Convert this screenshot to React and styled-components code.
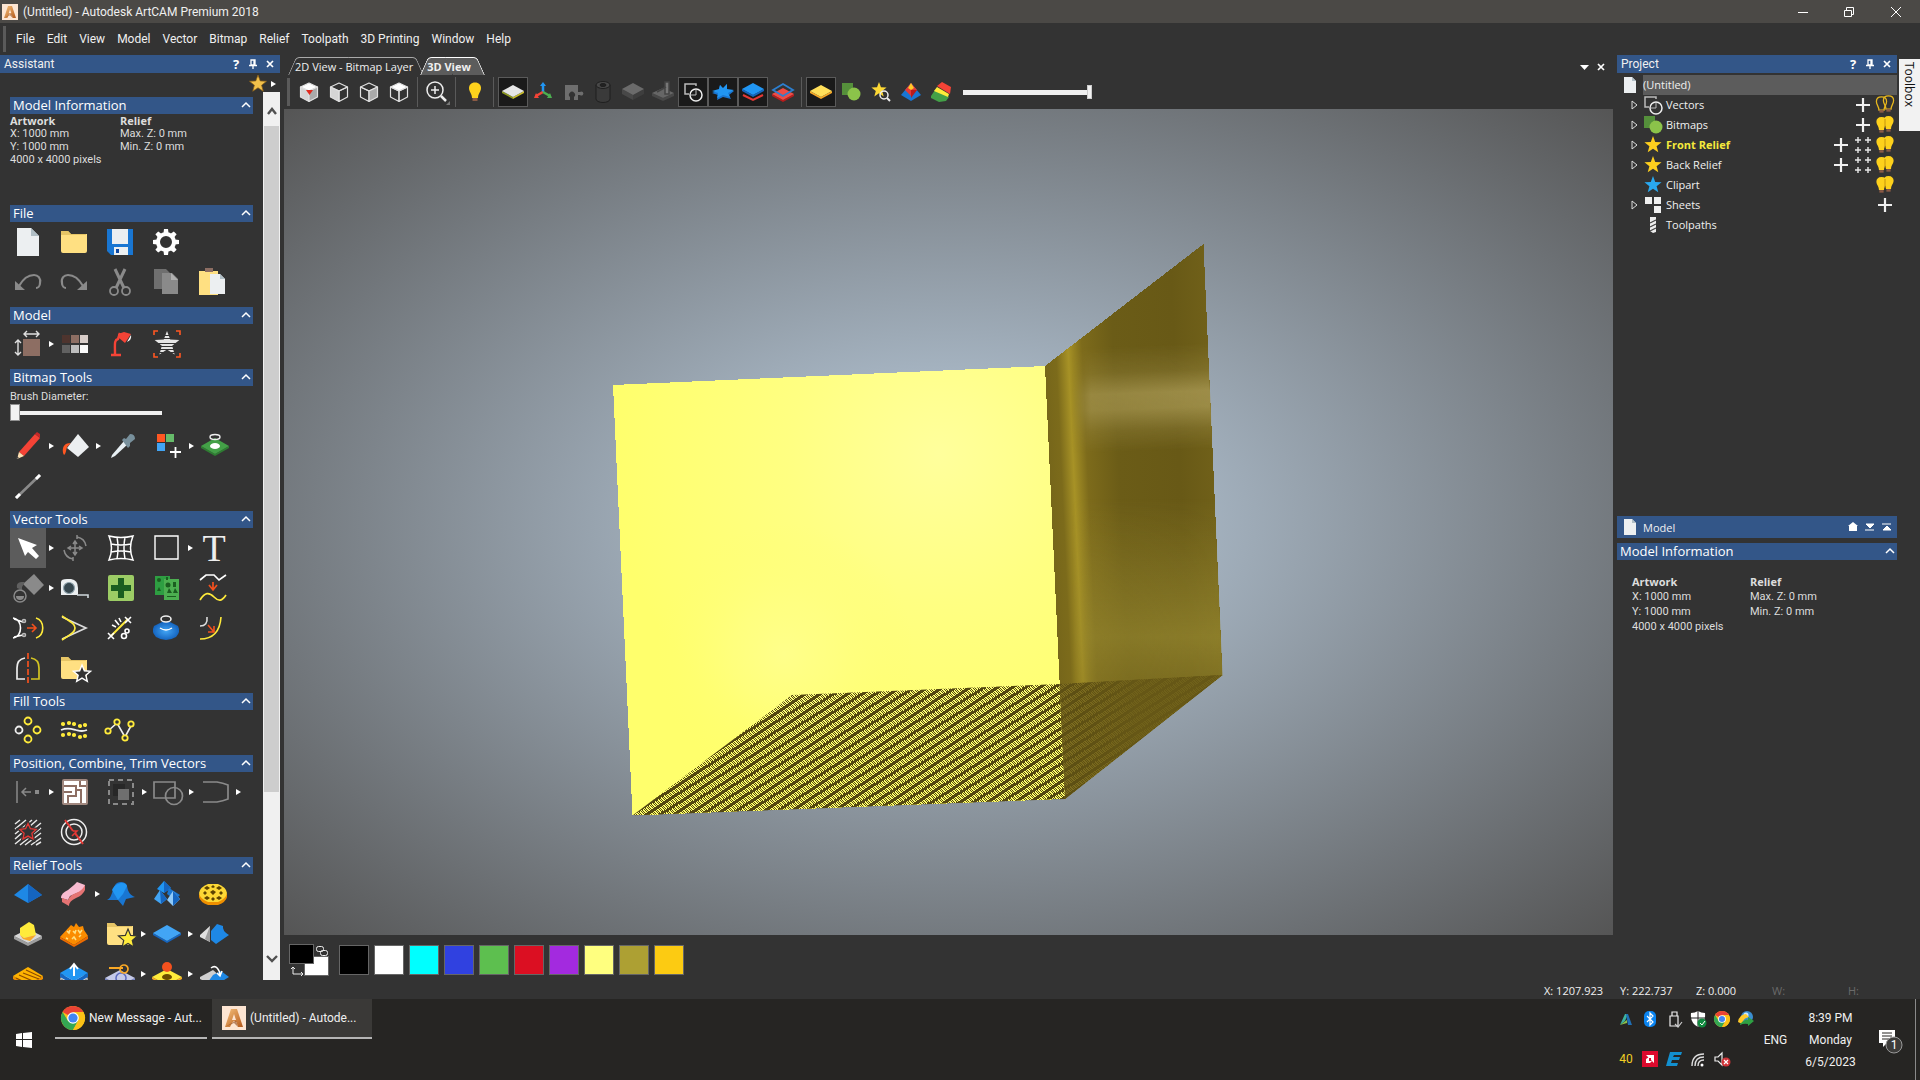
import React from 'react';
import styled, { createGlobalStyle, css } from 'styled-components';

const ui = `'Open Sans', 'Noto Sans', sans-serif`;
const narrow = `Roboto, 'Liberation Sans', sans-serif`;
const blue = '#335688';
const panel = '#333333';

const Global = createGlobalStyle`
  * { box-sizing: border-box; }
  body { margin: 0; background: ${panel}; color: #f0f0f0; font-family: ${ui}; font-size: 11px; overflow: hidden; }
  button { font: inherit; color: inherit; background: none; border: 0; padding: 0; margin: 0; white-space: nowrap; }
  ul { list-style: none; margin: 0; padding: 0; }
  h2, h3, p, dl, dt, dd { margin: 0; font-weight: 400; font-size: inherit; }
  svg { display: block; flex: none; overflow: visible; }
`;

/* ---------- icons: drawn around their own centre ---------- */

const starPts = (r, k = 0.42, cx = 0, cy = 0) =>
  Array.from({ length: 10 }, (_, i) => {
    const a = -Math.PI / 2 + (i * Math.PI) / 5;
    const q = i % 2 ? r * k : r;
    return `${(cx + q * Math.cos(a)).toFixed(2)},${(cy + q * Math.sin(a)).toFixed(2)}`;
  }).join(' ');

const Cube = ({ t, l, r, mark }) => (
  <g stroke="#e0e0e0" strokeWidth="1.2" strokeLinejoin="round">
    <path d="M0-9 8.5-5 0-1-8.5-5z" fill={t} />
    <path d="M-8.5-5 0-1V9.5L-8.5 5z" fill={l} />
    <path d="M8.5-5 0-1V9.5L8.5 5z" fill={r} />
    {mark && <path d="M-3-2H4L0.5 3z" fill="#e02b20" stroke="none" />}
  </g>
);

const Slab = ({ top, side, dark, y = 0, w = 12, h = 6, d = 3 }) => (
  <g>
    <path d={`M${-w} ${y}L0 ${y + h}V${y + h + d}L${-w} ${y + d}z`} fill={side} />
    <path d={`M${w} ${y}L0 ${y + h}V${y + h + d}L${w} ${y + d}z`} fill={dark || side} />
    <path d={`M0 ${y - h}L${w} ${y} 0 ${y + h} ${-w} ${y}z`} fill={top} />
  </g>
);

const Bulb = ({ x = 0, s = 1, line }) => (
  <g transform={`translate(${x} 0) scale(${s})`}>
    <path
      d="M0-9.500C4-9.500 6-7 6-4 6 0 3 1.500 3 6H-3C-3 1.500-6 0-6-4-6-7-4-9.500 0-9.500z"
      fill={line ? 'none' : '#fdd11c'}
      stroke={line ? '#e8b81e' : '#fdd11c'}
      strokeWidth={line ? 1.5 : 0}
    />
    <path d="M-2.500 6H2.500V9H-2.500z" fill="#8b5a44" />
  </g>
);

const twoBulbs = (line) => (
  <g>
    <Bulb x={-3.5} s={0.85} line={line} />
    <g transform="translate(0 -1)"><Bulb x={3.5} s={0.85} line={line} /></g>
    {!line && <path d="M0-6V3" stroke="#b8860b" strokeWidth="0.8" />}
  </g>
);

const docShape = (w, h, f) => (
  <g>
    <path d={`M${-w} ${-h}H${w - f}L${w} ${f - h}V${h}H${-w}z`} fill="#eceff1" />
    <path d={`M${w - f} ${-h}L${w} ${f - h}H${w - f}z`} fill="#b0bec5" />
  </g>
);

const folder = (
  <g>
    <path d="M-13-11H-6L-3-8H13V9Q13 11 11 11H-11Q-13 11-13 9z" fill="#ffe082" />
    <path d="M-13-11H-6L-3-8H12V-7H-13z" fill="#e6c566" />
  </g>
);

const dots = (pts, r, fill, stroke) => pts.map(([x, y], i) => <circle key={i} cx={x} cy={y} r={r} fill={fill} stroke={stroke} strokeWidth="1.8" />);

const Chrome = ({ r }) => (
  <g transform={`scale(${r / 12})`}>
    <circle r="12" fill="#fbc116" />
    <path d="M0 0-10.400-6A12 12 0 0 1 10.400-6z" fill="#ea4335" />
    <path d="M-10.400-6A12 12 0 0 0 0 12L5 3-5 3z" fill="#34a853" />
    <path d="M0-6H10.400A12 12 0 0 1 0 12L5 3z" fill="#fbc116" />
    <circle r="5.800" fill="#fff" />
    <circle r="4.600" fill="#4285f4" />
  </g>
);

const appLogo = (
  <g>
    <defs>
      <linearGradient id="lg" x1="0" y1="0" x2="1" y2="1"><stop offset="0" stopColor="#f7c27c" /><stop offset="1" stopColor="#b4581a" /></linearGradient>
    </defs>
    <path d="M-12-12H12V12H-12z" fill="#fde5d2" />
    <path d="M-3-9H3L9 9H4L2.500 4 0 3-2 5-4 9H-9z" fill="url(#lg)" />
    <path d="M0-4 2 2H-2z" fill="#fde5d2" />
    <path d="M-9 9 2 2.500 4 9 0 5z" fill="#8d4515" opacity=".6" />
  </g>
);

const g = '#8a8a8a';
const ICONS = {
  newDoc: docShape(11, 14, 8),
  smallDoc: docShape(6, 8, 4),
  folder,
  save: (
    <g>
      <path d="M-13-13H13V13H-9L-13 9z" fill="#1976d2" />
      <path d="M-8-13H8V2H-8zM-6 5H8V13H-6z" fill="#eceff1" />
      <path d="M-4 7H-1V11H-4z" fill="#0d47a1" />
    </g>
  ),
  gear: (
    <g>
      <circle r="8" fill="none" stroke="#fff" strokeWidth="4" />
      {[0, 45, 90, 135, 180, 225, 270, 315].map((a) => <path key={a} d="M-2.500-9-2-13H2L2.500-9z" fill="#fff" transform={`rotate(${a})`} />)}
    </g>
  ),
  undo: <g><path d="M-9 4C-5-3 0-7 6-7 10-7 13-4 12 1 12 4 10 6 8 6" fill="none" stroke={g} strokeWidth="2.200" /><path d="M-13-1V8H-3z" fill={g} /></g>,
  redo: <g transform="scale(-1 1)"><path d="M-9 4C-5-3 0-7 6-7 10-7 13-4 12 1 12 4 10 6 8 6" fill="none" stroke={g} strokeWidth="2.200" /><path d="M-13-1V8H-3z" fill={g} /></g>,
  cut: (
    <g stroke={g} fill="none" strokeWidth="1.800">
      <path d="M-5-13 4 6M5-13-4 6" strokeWidth="3" />
      <circle cx="-6" cy="9" r="4" /><circle cx="6" cy="9" r="4" />
    </g>
  ),
  copy: <g fill={g}><path d="M-12-13H0L4-9V7H-12z" fill="#6f6f6f" /><path d="M-4-9H6L12-3V12H-4z" /><path d="M5-9V-2H12z" fill="#b0b0b0" /></g>,
  paste: (
    <g transform="translate(2 0)">
      <path d="M-15-11H4V13H-15z" fill="#ffe082" /><path d="M-9-14H-1V-10H-9z" fill="#8d6e63" />
      <path d="M-4-8H6L11-3V12H-4z" fill="#eceff1" /><path d="M6-8V-3H11z" fill="#b0bec5" />
    </g>
  ),
  size: (
    <g>
      <path d="M-5-5H12V12H-5z" fill="#8d6e63" />
      <path d="M-4-10H11M-1-13-4-10-1-7M8-13 11-10 8-7M-10-4V11M-13-1-10-4-7-1M-13 8-10 11-7 8" fill="none" stroke="#e0e0e0" strokeWidth="1.400" />
    </g>
  ),
  swatches: (
    <g>
      {['#4e342e', '#8d6e63', '#d7ccc8', '#616161', '#bdbdbd', '#fafafa'].map((c, i) => <rect key={c} x={-13 + (i % 3) * 9} y={i < 3 ? -9 : 1} width="8" height="8" fill={c} />)}
    </g>
  ),
  lamp: (
    <g>
      <path d="M-6 10C-6 0-7-4-3-5L-1-11M-10 11H0" stroke="#f44336" strokeWidth="2.400" fill="none" />
      <path d="M-3-10 3-12 10-10 4-1-2-6z" fill="#f44336" /><path d="M10-9Q11-4 6-2z" fill="#fff" />
    </g>
  ),
  frameStar: (
    <g>
      <polygon points={starPts(13)} fill="#e6e6e6" />
      <path d="M-14-8.500H14M-14-5.500H14M-14-0.500H14M-14 2.500H14M-14 5.500H14M-14 8.500H14" stroke={panel} strokeWidth="1.200" />
      <path d="M-13-9V-13H-9M9-13H13V-9M13 9V13H9M-9 13H-13V9" fill="none" stroke="#ff5722" strokeWidth="1.600" />
    </g>
  ),
  pencil: <g><path d="M-9 6 7-12 12-8-4 10z" fill="#f44336" /><path d="M9-14 12-12 12-8 7-12z" fill="#c62828" /><path d="M-9 6-4 10-11 13z" fill="#ffe0b2" /><path d="M-11 10-9 12-12 13z" fill="#444" /></g>,
  bucket: <g><path d="M-12 7C-13 0-10-3-4-3L-8 1C-9 4-9 8-11 9z" fill="#ff5722" /><path d="M3-12 14 1 3 11-8 2z" fill="#eceff1" /></g>,
  dropper: <g><path d="M-11 12-10 9 2-5 6-2-7 10z" fill="#e8f0f4" /><path d="M0-6 2-8 4-7 8-12Q13-12 13-7L8-3 8 0 6 2z" fill="#78909c" /></g>,
  addColour: <g><path d="M-11-12H-3V-4H-11z" fill="#ff5722" /><path d="M-2-12H6V-4H-2z" fill="#66bb6a" /><path d="M-11-3H-3V5H-11z" fill="#42a5f5" /><path d="M2 6H13M7.500 1V12" stroke="#fff" strokeWidth="1.800" /></g>,
  greenSlab: <g><Slab top="#43a047" side="#2e7d32" y={0} w={14} h={8} d={2} /><ellipse cx="0" cy="0" rx="5" ry="3" fill="#fff" /><ellipse cx="0" cy="-9" rx="5" ry="2.500" fill="none" stroke="#eee" strokeWidth="1.400" /></g>,
  wand: <g strokeWidth="2.600"><path d="M-12 12 12-11" stroke={g} /><path d="M-12 12-8 8M8-7 12-11" stroke="#fff" strokeWidth="3" /></g>,
  cursor: <path d="M-10-10 9-3 4 0 11 8 8 11 0 4-3 8z" fill="#fff" />,
  transform: (
    <g stroke={g} fill="none" strokeWidth="1.500">
      <path d="M-7 0H7M0-7V7M-4-2-7 0-4 2M4-2 7 0 4 2M-2-4 0-7 2-4M-2 4 0 7 2 4" />
      <path d="M2-11A11 11 0 0 1 11-2M-11 2A11 11 0 0 0-2 11M2-13V-9M-2 13V9" />
    </g>
  ),
  mesh: (
    <g stroke="#fff" fill="none" strokeWidth="1.500">
      <path d="M-12-12Q0-9 12-12Q7 0 12 12Q0 9-12 12Q-7 0-12-12zM-4-11Q-2 0-4 11M4-11Q2 0 4 11M-10-4Q0-2 10-4M-10 4Q0 2 10 4" />
    </g>
  ),
  rect: <path d="M-12-12H11V11H-12z" fill="none" stroke="#fff" strokeWidth="1.400" />,
  text: <text x="0" y="13" textAnchor="middle" fontFamily="Liberation Serif, serif" fontSize="38" fill="#eee">T</text>,
  greyFill: <g><path d="M6-14 16-3 6 7-5-4z" fill={g} /><path d="M-11 0C-12-6-8-6-3-6L-6-1V2z" fill="#606060" /><circle cx="-8" cy="8" r="6" fill="none" stroke={g} strokeWidth="1.500" /><path d="M-12 8H-4A4 4 0 0 1-12 8z" fill={g} /></g>,
  tape: <g><path d="M-14-6Q-14-9-8-9H-4Q3-8 3 0V7H-14z" fill="#eceff1" /><circle cx="-6" cy="0" r="5.500" fill="#37474f" stroke="#90a4ae" strokeWidth="1.200" /><path d="M2 7H13V10" fill="none" stroke="#cfd8dc" strokeWidth="1.600" /></g>,
  plusGreen: <g><rect x="-13" y="-13" width="26" height="26" rx="2" fill="#9ccc65" /><path d="M-3-10H3V-3H10V3H3V10H-3V3H-10V-3H-3z" fill="#1b5e20" /></g>,
  nest: (
    <g>
      <path d="M-12-12H3V7H-12z" fill="#2e9e42" /><path d="M-3-9H12V12H-3z" fill="#4caf50" />
      <g fill="#1b5e20"><circle cx="-8" cy="-8" r="2" /><path d="M-10 3-8-1-6 3zM0 5 2 0 5 5zM6 5 8 0 11 5zM6-6H9V-1H6zM0 8H9V9H0zM-1-11H1V-8H-1z" /><circle cx="1" cy="-3" r="2.500" /></g>
    </g>
  ),
  polyCurve: <g transform="translate(1 0)" fill="none" strokeWidth="1.700"><path d="M-14-8-8-13H0L5-8 12-13" stroke="#fff" /><path d="M-1-6V1M-5-3-1 2 3-3" stroke="#f4511e" /><path d="M-14 12C-9 4-5 4 0 9S8 13 12 7" stroke="#ffeb3b" /></g>,
  joinCurve: <g fill="none" strokeWidth="1.600"><path d="M-15-10C-5-9-5 9-15 10M-14-9-5-6M-14 9-5 7" stroke="#fff" /><circle cx="-4" cy="-7" r="1.500" stroke="#bbb" /><circle cx="-4" cy="7" r="1.500" stroke="#bbb" /><path d="M-1 0H8M4-4 8 0 4 4" stroke="#f4511e" /><path d="M8-10C17-7 17 7 8 10" stroke="#ffeb3b" /></g>,
  corner: <g fill="none" strokeWidth="1.700"><path d="M-12-11 12 0-12 11" stroke="#ddd" /><path d="M-12-12C-3-6 1-4 1 0S-3 6-12 12" stroke="#ffeb3b" /></g>,
  trim: <g fill="none" strokeWidth="1.600"><path d="M-9 8 8-9" stroke="#ffeb3b" strokeWidth="2" /><path d="M-12 5-6 11M-12 11-6 5M5-11 11-5M5-5 11-11M-8-3-4-1M-5-8-1-3M-1-10 1-6" stroke="#fff" /><circle cx="7" cy="3" r="2" stroke="#fff" /><circle cx="4" cy="8" r="2.500" stroke="#fff" /></g>,
  bottle: <g><defs><radialGradient id="bt"><stop offset="0" stopColor="#42a5f5" /><stop offset="1" stopColor="#1565c0" /></radialGradient></defs><path d="M-4-6H4L12-2Q15 4 10 9 0 15-10 9-15 4-12-2z" fill="url(#bt)" /><ellipse cy="-9" rx="5" ry="3" fill="none" stroke="#eee" strokeWidth="1.600" /><path d="M-6 0Q0 4 6 0" stroke="#fff" strokeWidth="1.400" fill="none" /></g>,
  offset: <g fill="none" strokeWidth="1.600"><path d="M-12-2Q-4-2-5-11" stroke="#ddd" /><path d="M-4-3 2 4M2-2V4H-4" stroke="#f4511e" /><path d="M9-11C8 4 0 11-12 11" stroke="#ffeb3b" /></g>,
  mirror: <g fill="none" strokeWidth="1.700"><path d="M-3-10C-10-9-11-4-11 0V11H-3" stroke="#eee" /><path d="M3-10C10-9 11-4 11 0V11H3" stroke="#d4c522" /><path d="M0-15V15" stroke="#f4511e" strokeDasharray="6 2" /></g>,
  folderStar: <g>{folder}<polygon points={starPts(9, 0.45, 8, 6)} fill={panel} stroke="#fff" strokeWidth="1.400" /></g>,
  folderStarY: <g>{folder}<polygon points={starPts(10, 0.45, 8, 5)} fill="#ffeb3b" stroke="#333" strokeWidth="1.200" /></g>,
  ringDots: <g>{dots([[0, -9], [9, 0], [0, 9]], 3.5, 'none', '#ffeb3b')}{dots([[-9, 0]], 3.5, 'none', '#eee')}</g>,
  waveDots: <g>{dots([[-11, -6], [-5, -7], [0, -6], [6, -4], [11, -5], [-11, 5], [-5, 4], [0, 5], [6, 7], [11, 6]], 1.2, '#ffeb3b', '#ffeb3b')}<path d="M-13 0C-6-3-2-1 2 0S8 2 13 0" fill="none" stroke="#eee" strokeWidth="1.800" /></g>,
  nodeLine: <g><path d="M-12 1-3-7 5 7 12-6" fill="none" stroke="#eee" strokeWidth="1.600" />{dots([[-12, 1], [-3, -8], [5, 8], [11, -6]], 2.7, panel, '#ffeb3b')}</g>,
  alignLeft: <g stroke={g} fill="none" strokeWidth="1.500"><path d="M-11-11V11M-6 0H3M-2-4-6 0-2 4" /><path d="M7-2H11V2H7z" fill={g} stroke="none" /></g>,
  block: <g><rect x="-13" y="-13" width="26" height="26" rx="2" fill="#a1887f" /><path d="M-11-11H11V11H-11z" fill="#fff" /><path d="M-11-6H1V4H-7V11M-7 4V6M5-11V-6H11M1-6V-2H6V11M-11 0H-3" fill="none" stroke="#8d6e63" strokeWidth="2" /></g>,
  group: <g><path d="M-12-12H12V12H-12z" fill="none" stroke={g} strokeWidth="2" strokeDasharray="5 4" /><path d="M-8-8H4V4H-8z" fill="#272727" /><path d="M-3-3H8V8H-3z" fill="#6f6f6f" /></g>,
  weld: <g fill="none" stroke={g} strokeWidth="1.700"><path d="M-14-10H7V6H-14z" /><circle cx="6" cy="4" r="8.500" /></g>,
  arcClip: <path d="M-12-10H2Q8-9 13-7V7Q8 9 2 10H-12" fill="none" stroke={g} strokeWidth="1.700" />,
  starHatch: (
    <g>
      <path d="M-13-8-8-12M-13-3-2-12M-13 2 4-12M-13 7 9-12M-13 12 13-9M-8 13 13-4M-3 13 13 1M3 13 13 6M8 13 13 10" stroke="#e8e8e8" strokeWidth="1.500" />
      <polygon points={starPts(10.5, 0.48)} fill={panel} stroke={panel} strokeWidth="2" />
      <polygon points={starPts(8.5, 0.48)} fill={panel} stroke="#e53935" strokeWidth="1.300" />
    </g>
  ),
  noRing: <g fill="none" strokeWidth="1.500"><circle r="12.500" stroke="#eee" /><circle r="8" stroke="#eee" /><path d="M-9-12-1-1M1 1 9 12" stroke="#e53935" strokeWidth="2" /><path d="M-1-1H3L-2 4M3 4 1 1" stroke="#e53935" /></g>,
  pyramid: <g><path d="M0-10 14 1 0 9-14 1z" fill="#1e88e5" /><path d="M0-10 14 1 0 9z" fill="#1565c0" /></g>,
  ribbon: <g><path d="M-13 4Q-13-1-6-4L0-9 3-12 11-9Q12-4 3-1L-4 2-6 6z" fill="#f8bbd0" /><path d="M11-9V-4Q9 1 2 4T-5 12L-12 8V4L-6 6Q-4 1 2-1T11-9z" fill="#e57373" /></g>,
  blob: <g><path d="M-14 6C-8 4-9-8-4-11 0-13 5-12 6-8 7-2 9 1 14 3L5 5 2 12-3 6z" fill="#1976d2" /><path d="M-9-4C-6-12 5-13 6-8L2 0-3 6z" fill="#2196f3" /></g>,
  cubes: <g><path d="M-3-13 4-6-3-1-10-5z" fill="#2196f3" /><path d="M-3-13 4-6-3-1z" fill="#1565c0" /><path d="M2-6 13 1 8 6 0 0z" fill="#1976d2" /><path d="M-13 5-7-4 0 5-6 10z" fill="#42a5f5" /><path d="M-7-4 0 5-6 10z" fill="#1565c0" /><path d="M0 6 6-3 13 5 6 12z" fill="#90caf9" /><path d="M6-3 13 5 6 12z" fill="#1565c0" /></g>,
  weave: (
    <g>
      <path d="M-14 0V3Q-13 8-5 11H5Q13 8 14 3V0z" fill="#ef8f00" />
      <path d="M-14-1Q-13-7-5-10H5Q13-7 14-1 13 5 5 8H-5Q-13 5-14-1z" fill="#fdd835" />
      <path d="M-9-6-6-8-3-6-6-4zM9-6 6-8 3-6 6-4zM-9 4-6 2-3 4-6 6zM9 4 6 2 3 4 6 6zM0-4 3-2 0 1-3-2zM-10-1-8-3-6-1-8 1zM10-1 8-3 6-1 8 1zM0 3 2 5 0 7-2 5zM0-9 2-7 0-6-2-7z" fill="#5d4300" />
    </g>
  ),
  gem: <g><Slab top="#d8d8d8" side="#9e9e9e" y={2} w={14} h={7} d={3} /><path d="M-8-6 1-12 6-9 8 1-4 4-8 1z" fill="#ffeb3b" /><path d="M-8 1-4 4 8 1 2 7-5 5z" fill="#f9a825" /></g>,
  lava: <g><path d="M-14 3-3-9 0-7 2-11 5-7 9-8 10-4 14 2 0 11z" fill="#fb8c00" /><path d="M-14 3V5L0 13 14 5V2L0 11z" fill="#ef6c00" /><path d="M-7-3-5-1-4-4M-1-3 1-1 2-4M4-4 6-1 8-4M-8 4-6 5M-2 5 0 3 2 6M5 3 7 1" stroke="#ffe082" fill="none" strokeWidth="1.500" /></g>,
  blueSlab: <Slab top="#42a5f5" side="#1565c0" y={-1} w={14} h={8} d={2} />,
  splitBlob: <g><path d="M-14 1-4-8V8L-14 3z" fill="#e0e0e0" /><path d="M-4-8V8L-9 5z" fill="#9e9e9e" /><path d="M-3-3 3-10 9-8Q8-3 15 1L2 10-3 6z" fill="#1e88e5" /></g>,
  stripes: <g><Slab top="#ffb300" side="#ef8f00" y={2} w={15} h={9} d={3} /><path d="M-12 4 3 11M-9 1 7 8M-5-1 11 5M-2-4 13 3" stroke="#8d4b00" strokeWidth="1.200" /></g>,
  raise: <g><Slab top="#e0e0e0" side="#9e9e9e" y={4} w={14} h={8} d={2} /><Slab top="#2196f3" side="#1565c0" y={-1} w={14} h={8} d={4} /><path d="M0 2V-9M-4-5 0-10 4-5" fill="none" stroke="#fff" strokeWidth="2" /></g>,
  rotary: <g><Slab top="#c5cae9" side="#7986cb" y={4} w={15} h={8} d={2} /><circle cx="1" cy="4" r="5" fill="none" stroke="#5c6bc0" strokeWidth="1.500" /><path d="M-11-6H3" stroke="#f9a825" strokeWidth="2" /><circle cx="4" cy="-5" r="4" fill="none" stroke="#f9a825" strokeWidth="1.700" /></g>,
  ballSlab: <g><Slab top="#ffeb3b" side="#f9a825" y={3} w={15} h={8} d={2} /><ellipse cy="3" rx="5" ry="3" fill="#6d4c00" /><circle cy="-7" r="5" fill="#f4511e" /></g>,
  swapSlab: <g><path d="M-14 3-1-4 6 2-6 9-14 5z" fill="#cfcfcf" /><path d="M-1 1 7-3 15 3 2 11-6 8z" fill="#1e88e5" /><path d="M-3-6C2-10 6-4 6 2M3-1 6 2 8-3" fill="none" stroke="#fff" strokeWidth="1.500" /></g>,

  cube1: <Cube t="#fff" l="#d5d5d5" r="#aaa" mark />,
  cube2: <Cube t="none" l="#d5d5d5" r="none" />,
  cube3: <Cube t="none" l="none" r="#aaa" />,
  cube4: <Cube t="#fff" l="none" r="none" />,
  zoom: <g fill="none" stroke="#eee" strokeWidth="1.500"><circle cx="-2" cy="-2" r="8" /><path d="M-6-2H2M-2-6V2" /><path d="M4 4 9 9" strokeWidth="2.500" /><path d="M9 13H13V9z" fill="#777" stroke="none" /></g>,
  bulb: <Bulb />,
  reliefSlab: <Slab top="#e6e6e6" side="#8d9a20" dark="#c9bd2a" y={-1} w={11} h={6} d={2} />,
  axes: <g strokeWidth="2.500" fill="none"><path d="M0 0V-8" stroke="#2196f3" /><path d="M-3-6 0-10 3-6z" fill="#2196f3" /><path d="M0 0-7 4" stroke="#f44336" /><path d="M-9 6-7 1-4 6z" fill="#f44336" /><path d="M0 0 7 4" stroke="#4caf50" /><path d="M9 6 7 1 4 6z" fill="#4caf50" /></g>,
  puzzle: <path d="M-8-7H5V0H7A2 2 0 1 1 7 3H5V8H1V5A3 3 0 1 0-3 5V8H-8z" fill="#6e6e6e" />,
  cylinder: <g fill="#3a3a3a" stroke="#1f1f1f"><path d="M-7-7V7A7 3.500 0 0 0 7 7V-7z" /><ellipse cy="-7" rx="7" ry="3.500" fill="#484848" /><ellipse cy="-7" rx="3" ry="1.500" fill="#222" /></g>,
  greyBlock: <Slab top="#6b6b6b" side="#484848" dark="#3e3e3e" y={-3} w={11} h={6} d={5} />,
  greyMill: <g><Slab top="#666" side="#484848" y={1} w={11} h={5} d={3} /><path d="M-6 0 3-5M2-10H6V2H2z" stroke="#444" strokeWidth="1.500" fill="#777" /></g>,
  vecIcon: <g fill="none" stroke="#bbb" strokeWidth="1.500"><path d="M-4 2H-8V-8H3V-6" /><circle cx="3" cy="3" r="6" stroke="#eee" /><path d="M3-2V3H-2" strokeWidth="1" /></g>,
  blueStar: <g><polygon points="0,-3 4,-8 4,-2 11,-1 6,3 8,7 0,5 -6,8 -5,3 -11,1 -4,-2 -3,-7" fill="#1976d2" /><polygon points="0,-4 4,-8 4,-3 11,-2 5,1 7,5 0,3 -6,6 -5,1 -11,-1 -4,-3 -3,-7" fill="#2196f3" /></g>,
  blueRed: <g><path d="M-10 3 0 8 10 3" fill="none" stroke="#e53935" strokeWidth="2" /><Slab top="#2196f3" side="#1565c0" y={-3} w={11} h={6} d={2} /></g>,
  redBlue: <g><Slab top="#ef4b45" side="#b71c1c" y={2} w={11} h={6} d={2} /><path d="M0-8 10-2 0 4-10-2z" fill="none" stroke="#2c7fd0" strokeWidth="1.800" /></g>,
  goldSlab: <Slab top="#ffdf5a" side="#f9a825" y={-1} w={11} h={6} d={2} />,
  bitmapIcon: <g><path d="M-9-9H2V3H-9z" fill="#55903b" /><circle cx="3" cy="2" r="6.500" fill="#8bc34a" /></g>,
  starZoom: <g><polygon points={starPts(8, 0.42, -2, -2)} fill="#fdd835" /><circle cx="3" cy="3" r="4" fill="none" stroke="#eee" strokeWidth="1.500" /><path d="M6 6 9 9" stroke="#eee" strokeWidth="2" /></g>,
  prism: <g><path d="M0-9 10 3 0 9-10 3z" fill="#1976d2" /><path d="M0-9 6-2 0 4-6-2z" fill="#e53935" /><path d="M0-9 3-4 0-2-3-4z" fill="#ffca28" /><path d="M0-2 6-2 0 6z" fill="#b71c1c" /></g>,
  rainbow: <g><path d="M-10 4-6-2 8 5 5 9-2 10-10 6z" fill="#43a047" /><path d="M-7-1-4-5 8 2 7 5z" fill="#ffeb3b" /><path d="M-4-6 1-10 10-5 9 2z" fill="#f44336" /></g>,
  plus: <path d="M-7 0H7M0-7V7" stroke="#f0f0f0" strokeWidth="2.200" />,
  grid: <path d="M-8-5H-2M2-5H8M-8 5H-2M2 5H8M-5-8V-2M-5 2V8M5-8V-2M5 2V8" stroke="#e8e8e8" strokeWidth="1.400" />,
  bulbs: twoBulbs(false),
  bulbsOff: twoBulbs(true),
  star: <polygon points={starPts(9)} fill="#fdcf1e" />,
  starBlue: <polygon points={starPts(9)} fill="#29a9f0" />,
  starGold: <polygon points={starPts(9)} fill="#f2c14b" stroke="#8c5f14" strokeWidth="0.700" />,
  sheets: <path d="M-8-8H-1V-1H-8zM1-8H8V-1H1zM1 1H8V8H1z" fill="#f0f0f0" />,
  bit: <g><path d="M-3-8H3V7L0 8-3 6z" fill="#eee" /><path d="M-3-2 3-5M-3 2 3-1M-3 6 3 3" stroke="#444" strokeWidth="1.300" /></g>,
  twisty: <path d="M-2-4 3 0-2 4z" fill="none" stroke="#ddd" />,
  tri: <path d="M-2-3 3 0-2 3z" fill="#fff" />,
  help: <text y="5" textAnchor="middle" fontFamily="Open Sans, sans-serif" fontWeight="700" fontSize="13" fill="#fff">?</text>,
  pin: <path d="M-2-4H2V1H-2zM-4 1.500H4M0 2V5M1-4V1" fill="none" stroke="#fff" strokeWidth="1.300" />,
  close: <path d="M-3-3 3 3M3-3-3 3" stroke="#fff" strokeWidth="1.700" />,
  down: <path d="M-4-2H5L0.500 3z" fill="#fff" />,
  chevron: <path d="M-4 1 0-3 4 1" fill="none" stroke="#fff" strokeWidth="1.500" />,
  minimise: <path d="M-5 0.500H5" stroke="#fff" />,
  restore: <path d="M-4.500-1.500H2.500V4.500H-4.500zM-2.500-1.500V-4.500H4.500V2.500H2.500" fill="none" stroke="#fff" />,
  closeWin: <path d="M-5-5 5 5M5-5-5 5" stroke="#fff" />,
  home: <path d="M0-5 5-1H4V4H-4V-1H-5z" fill="#fff" />,
  toBottom: <path d="M-4-3H4L0 1zM-5 3H4" fill="#fff" stroke="#fff" />,
  toTop: <path d="M-4 3H4L0-1zM-5-3H4" fill="#fff" stroke="#fff" />,
  scrollUp: <path d="M-4 5 0 0 4 5" fill="none" stroke="#505050" strokeWidth="2.400" />,
  scrollDown: <path d="M-5-3 0 2 5-3" fill="none" stroke="#505050" strokeWidth="2.400" />,
  link: <g fill="none" stroke="#eee"><rect x="-5.500" y="-4.500" width="7" height="5" rx="2" /><rect x="-1.500" y="-0.500" width="7" height="5" rx="2" /></g>,
  swap: <path d="M-4-3V3H6M-6-2-4-4-2-2M4 1 6 3 4 5" fill="none" stroke="#eee" />,
  logo: appLogo,
  chrome: <Chrome r={12} />,
  chromeS: <Chrome r={8} />,
  windows: <path d="M-8-6-2-7V-1H-8zM-1-7 8-8V-1H-1zM-8 0H-2V7L-8 6zM-1 0H8V8L-1 7z" fill="#fff" />,
  autodesk: <g><path d="M-6 6-1-5H2L-1 2z" fill="#3cb4a0" /><path d="M0-5H2L6 6H2z" fill="#1f6fb5" /><path d="M-6 6 1 1V4z" fill="#8bc34a" /></g>,
  bluetooth: <g><rect x="-6" y="-8" width="12" height="16" rx="5" fill="#0a84f0" /><path d="M-3-3 3 3 0 6V-6L3-3-3 3" fill="none" stroke="#fff" strokeWidth="1.200" /></g>,
  usb: <g fill="none" stroke="#eee" strokeWidth="1.200"><path d="M-4-3H4V7H-4zM-2-3V-7H3V-3" /><path d="M1 5 4 8 8 3" stroke="#ccc" /></g>,
  shield: <g><path d="M0-8Q3-6 7-6 8 4 0 8-8 4-7-6-3-6 0-8z" fill="#fff" /><path d="M0-8V8M-7-1H7" stroke="#222" /><circle cx="4" cy="4" r="4.500" fill="#10893e" /><path d="M2 4 4 6 7 2" stroke="#fff" fill="none" /></g>,
  idm: <g><circle cx="1" cy="-2" r="6" fill="#3b8ed0" /><circle cx="0" cy="-4" r="2.500" fill="#cfe8fb" /><path d="M-8 3Q-7-4 0-5L3-2Q-3-1-4 5z" fill="#ffc928" /><path d="M-6 5Q0-1 2 1V-2L8 2 2 7V5Q-2 4-6 6z" fill="#2ea043" /></g>,
  amd: <g><path d="M-8-8H8V8H-8z" fill="#dc0a2d" /><path d="M-4-4H4V4L1 1V-1H-1L-4-4zM-4 0-1-2V2H2L0 4H-4z" fill="#fff" /></g>,
  eset: <path d="M-4-7H8L7-4H0L-1-2H6L5 1H-2L-3 4H4L3 7H-8z" fill="#1390cf" />,
  wifi: <g fill="none" stroke="#ddd" strokeWidth="1.400"><path d="M-6 7Q-6-5 6-5M-3 7Q-3-2 6-2M0 7Q0 1 6 1" /><circle cx="4" cy="6" r="1.500" fill="#fff" stroke="none" /></g>,
  mute: <g><path d="M-7-2H-4L0-6V6L-4 2H-7z" fill="none" stroke="#eee" strokeWidth="1.200" /><circle cx="4" cy="3" r="4.500" fill="#d13438" /><path d="M2 1 6 5M6 1 2 5" stroke="#fff" strokeWidth="1.200" /></g>,
  notify: <g><path d="M-10-10H6V3H-2L-6 7V3H-10z" fill="#fff" /><path d="M-7-7H3M-7-4H3M-7-1H0" stroke="#262523" /><circle cx="5" cy="5" r="8" fill="#3d3c3a" stroke="#999" /><text x="5" y="9" textAnchor="middle" fontFamily="Roboto, sans-serif" fontSize="12" fill="#fff">1</text></g>,
};

const Icon = ({ name, size = 32, scale = 1 }) => {
  const b = size / scale;
  return <svg width={size} height={size} viewBox={`${-b / 2} ${-b / 2} ${b} ${b}`} aria-hidden="true">{ICONS[name]}</svg>;
};

/* ---------- frame ---------- */

const Shell = styled.div`
  display: flex;
  flex-direction: column;
  height: 100vh;
`;

const TitleBar = styled.header`
  display: flex;
  align-items: center;
  height: 23px;
  flex: none;
  padding-left: 2px;
  gap: 5px;
  background: #4b4946;
  font: 12px ${narrow};
`;

const WindowButtons = styled.div`
  display: flex;
  margin-left: auto;
`;

const WindowButton = styled.button`
  display: grid;
  place-items: center;
  width: 46px;
  height: 20px;
  &:last-child { width: 48px; }
`;

const MenuBar = styled.nav`
  display: flex;
  align-items: center;
  gap: 12px;
  height: 32px;
  flex: none;
  padding-left: 3px;
  font: 12px ${narrow};
`;

const Grip = styled.i`
  width: 3px;
  height: ${(p) => p.$h}px;
  margin-right: ${(p) => p.$gap || 0}px;
  background: #5a5a5a;
`;

const Main = styled.div`
  display: flex;
  flex: 1;
  min-height: 0;
`;

const PanelTitle = styled.div`
  display: flex;
  align-items: center;
  height: 18px;
  flex: none;
  padding: 0 2px 0 4px;
  background: ${blue};
  font: 12px ${narrow};
  h2 { flex: 1; }
`;

const MiniButton = styled.button`
  display: grid;
  place-items: center;
  width: 17px;
  height: 17px;
`;

/* ---------- assistant ---------- */

const Assistant = styled.aside`
  display: flex;
  flex-direction: column;
  width: 280px;
  flex: none;
`;

const Favourites = styled.div`
  display: flex;
  align-items: center;
  justify-content: flex-end;
  height: 19px;
  flex: none;
  padding-top: 2px;
  ${MiniButton}:last-child { width: 14px; }
`;

const ScrollRow = styled.div`
  display: flex;
  flex: 1;
  min-height: 0;
  margin-bottom: 2px;
`;

const Sections = styled.div`
  flex: 1;
  padding: 5px 10px 0;
  overflow: hidden;
`;

const ScrollBar = styled.div`
  display: flex;
  flex-direction: column;
  width: 17px;
  background: #f0f0f0;
`;

const ScrollButton = styled.button`
  display: grid;
  place-items: center;
  height: ${(p) => p.$h}px;
`;

const ScrollTrack = styled.div`
  display: flex;
  flex: 1;
  padding: 0 1px;
`;

const ScrollThumb = styled.div`
  flex: 1;
  height: 82%;
  background: #cdcdcd;
`;

const Section = styled.section`
  padding-bottom: 5px;
`;

const SectionHead = styled.h3`
  display: flex;
  align-items: center;
  justify-content: space-between;
  height: 17px;
  padding: 0 0 0 3px;
  background: ${blue};
  color: #fff;
  font: 13px/17px ${ui};
  ${MiniButton} { width: 14px; }
`;

const Info = styled.dl`
  display: grid;
  grid-template-columns: ${(p) => p.$col}px 1fr;
  align-content: start;
  min-height: ${(p) => p.$min || 0}px;
  padding: ${(p) => p.$pad};
  font: 11px/${(p) => p.$line}px ${narrow};
  color: #ddd;
  dt { font-weight: 700; font-family: ${ui}; }
`;

const Tools = styled.div`
  display: flex;
  flex-wrap: wrap;
`;

const ToolPair = styled.span`
  display: flex;
  width: ${(p) => (p.$arrow ? 47 : 46)}px;
  height: 40px;
`;

const Tool = styled.button`
  display: grid;
  place-items: center;
  width: 36px;
  background: ${(p) => (p.$active ? '#5c5c5c' : 'none')};
`;

const Flyout = styled.button`
  display: grid;
  place-items: center;
  width: 10px;
`;

const Brush = styled.label`
  display: flex;
  flex-direction: column;
  align-items: flex-start;
  padding: 4px 0 5px;
  height: 40px;
  font: 11px/14px ${narrow};
  color: #ddd;
`;

const thumb = css`
  -webkit-appearance: none;
  width: ${(p) => p.$tw}px;
  height: ${(p) => p.$th}px;
  margin-top: ${(p) => (p.$track - p.$th) / 2}px;
  background: #f2f2f2;
  border: 1px solid ${(p) => (p.$tw > 6 ? '#8f8f8f' : '#ccc')};
`;

const Slider = styled.input`
  -webkit-appearance: none;
  width: ${(p) => p.$w}px;
  height: 17px;
  margin: 0;
  background: none;
  &::-webkit-slider-runnable-track { height: ${(p) => p.$track}px; background: #f0f0f0; }
  &::-webkit-slider-thumb { ${thumb} }
`;

/* ---------- view ---------- */

const ViewColumn = styled.main`
  display: flex;
  flex-direction: column;
  flex: 1;
  min-width: 0;
  margin: 0 4px;
`;

const TabRow = styled.div`
  display: flex;
  align-items: flex-end;
  height: 20px;
  flex: none;
  padding-left: 4px;
`;

const Tab = styled.button`
  position: relative;
  height: 18px;
  padding: 0 ${(p) => (p.$on ? 14 : 11)}px 0 7px;
  margin-left: ${(p) => (p.$on ? -4 : 0)}px;
  font-weight: ${(p) => (p.$on ? 700 : 400)};
  line-height: 17px;
  z-index: ${(p) => (p.$on ? 1 : 0)};
  &::before, &::after {
    content: '';
    position: absolute;
    z-index: -1;
    inset: 0 50% 0 0;
    border: 1px solid ${(p) => (p.$on ? '#fff' : '#aaa')};
    border-width: 1px 0 0 1px;
    border-radius: 4px 0 0 0;
    background: ${(p) => (p.$on ? '#5c5c5c' : panel)};
    transform: skewX(-24deg);
    transform-origin: bottom;
  }
  &::after {
    inset: 0 0 0 50%;
    border-width: 1px 1px 0 0;
    border-radius: 0 4px 0 0;
    transform: skewX(24deg);
  }
`;

const TabActions = styled.div`
  display: flex;
  margin-left: auto;
  padding-right: 4px;
`;

const ToolBar = styled.div`
  display: flex;
  align-items: center;
  height: 34px;
  flex: none;
  padding-left: 3px;
`;

const BarButton = styled.button`
  display: grid;
  place-items: center;
  width: 30px;
  height: 30px;
  border: 1px solid ${(p) => (p.$on ? '#5a5a5a' : 'transparent')};
  background: ${(p) => (p.$on ? '#1a1a1a' : 'none')};
`;

const BarRule = styled.i`
  width: 1px;
  height: 30px;
  margin: 0 4px 0 3px;
  background: #5a5a5a;
`;

const BarSlider = styled.span`
  display: flex;
  margin-left: 7px;
`;

const Canvas = styled.div`
  flex: 1;
  min-height: 0;
  background: radial-gradient(ellipse farthest-corner at center, #c0d3e5 0%, #555555 100%);
  svg { width: 100%; height: 100%; }
`;

const Palette = styled.div`
  display: flex;
  height: 47px;
  flex: none;
  padding: 9px 0 0 5px;
`;

const Current = styled.div`
  display: grid;
  grid-template-columns: 15px 10px 15px;
  grid-template-rows: 12px 8px 12px;
  width: 40px;
  margin-right: 10px;
  svg { place-self: center; }
`;

const Ink = styled.span`
  grid-area: ${(p) => p.$area};
  z-index: ${(p) => p.$z};
  background: ${(p) => p.$c};
  border: 1px solid #666;
`;

const Spot = styled.span`
  grid-area: ${(p) => p.$area};
  display: grid;
`;

const Swatch = styled.button`
  width: 30px;
  height: 30px;
  margin: 1px 5px 0 0;
  border: 1px solid #666;
  background: ${(p) => p.$c};
`;

/* ---------- project ---------- */

const Project = styled.aside`
  display: flex;
  flex-direction: column;
  width: 280px;
  flex: none;
  margin-right: 2px;
`;

const TreeArea = styled.div`
  flex: 443 1 0;
  padding-top: 2px;
`;

const TreeRow = styled.div`
  display: flex;
  align-items: center;
  height: 20px;
  padding: ${(p) => (p.$root ? '0 0 0 3px' : '0 1px 0 8px')};
`;

const Slot = styled.span`
  display: grid;
  place-items: center;
  width: ${(p) => p.$w}px;
  height: 20px;
`;

const Name = styled.span`
  flex: 1;
  padding-left: 3px;
  line-height: 20px;
  font-weight: ${(p) => (p.$hot ? 700 : 400)};
  color: ${(p) => (p.$hot ? '#f5e93c' : '#f0f0f0')};
`;

const RootName = styled.span`
  flex: 1;
  margin-left: 3px;
  line-height: 20px;
  background: #5c5c5c;
`;

const RowButton = styled.button`
  display: grid;
  place-items: center;
  width: 22px;
  height: 20px;
`;

const ModelArea = styled.div`
  flex: 468 1 0;
`;

const ModelHead = styled.div`
  display: flex;
  align-items: center;
  height: 22px;
  margin-bottom: 5px;
  padding: 0 2px 0 3px;
  background: ${blue};
  h2 { flex: 1; padding-left: 3px; }
`;

const ToolboxTab = styled.button`
  align-self: flex-start;
  width: 21px;
  height: 72px;
  margin-top: 4px;
  padding: 3px 0;
  background: #f2f2f2;
  color: #111;
  writing-mode: vertical-rl;
  text-align: left;
  font-size: 12px;
  line-height: 21px;
`;

/* ---------- status and task bar ---------- */

const Status = styled.footer`
  display: flex;
  justify-content: flex-end;
  height: 17px;
  flex: none;
  line-height: 18px;
`;

const Coord = styled.span`
  width: 76px;
  color: ${(p) => (p.$dim ? '#6a6a6a' : '#f0f0f0')};
  &:last-child { width: 72px; }
`;

const TaskBar = styled.div`
  display: flex;
  height: 81px;
  flex: none;
  background: #262523;
  font: 12px ${narrow};
`;

const Start = styled.button`
  display: grid;
  place-items: center;
  width: 48px;
  margin-right: 7px;
`;

const Task = styled.button`
  display: flex;
  align-items: center;
  gap: 4px;
  width: ${(p) => (p.$on ? 160 : 152)}px;
  height: 40px;
  margin-right: 5px;
  padding: 0 ${(p) => (p.$on ? 10 : 6)}px;
  background: ${(p) => (p.$on ? '#3a3937' : 'none')};
  border-bottom: 2px solid #b5b5b5;
`;

const Tray = styled.div`
  display: grid;
  grid-template: 40px 40px / repeat(6, 24px);
  place-items: center;
  margin-left: auto;
`;

const Forty = styled.span`
  color: #f2d024;
`;

const Language = styled.button`
  width: 35px;
`;

const Clock = styled.time`
  display: flex;
  flex-direction: column;
  justify-content: center;
  width: 75px;
  text-align: center;
  line-height: 22px;
`;

const Notify = styled.button`
  display: grid;
  place-items: center;
  width: 48px;
  margin-right: 4px;
  padding-right: 6px;
  border-right: 1px solid #8a8a8a;
`;

/* ---------- data ---------- */

const FILE = ['newDoc:New', 'folder:Open', 'save:Save', 'gear:Options', 'gap', 'undo:Undo', 'redo:Redo', 'cut:Cut', 'copy:Copy', 'paste:Paste'];
const MODEL = ['size>:Set size', 'swatches:Greyscale', 'lamp:Lights', 'frameStar:Frame'];
const BITMAP = ['pencil>:Paint', 'bucket>:Flood fill', 'dropper:Pick colour', 'addColour>:Add colour', 'greenSlab:Bitmap to relief', 'wand:Draw line'];
const VECTOR = ['cursor>*:Select', 'transform:Transform', 'mesh:Envelope', 'rect>:Rectangle', 'text:Text', 'greyFill>:Vector doctor', 'tape:Measure', 'plusGreen:Add', 'nest:Nest', 'polyCurve:Fit curves', 'joinCurve:Join', 'corner:Fillet', 'trim:Trim', 'bottle:Wrap', 'offset:Offset', 'mirror:Mirror', 'folderStar:Library'];
const FILL = ['ringDots:Block copy', 'waveDots:Paste along curve', 'nodeLine:Nodes'];
const POSITION = ['alignLeft>:Align', 'block:Block', 'group>:Group', 'weld>:Weld', 'arcClip>:Clip', 'starHatch:Hatch', 'noRing:Slice'];
const RELIEF = ['pyramid:Shape editor', 'ribbon>:Sweep', 'blob:Smooth', 'cubes:Add relief', 'weave:Weave', 'gem:Extrude', 'lava:Texture', 'folderStarY>:Relief library', 'blueSlab>:Plane', 'splitBlob:Mirror relief', 'stripes:Stripes', 'raise:Raise', 'rotary>:Spin', 'ballSlab>:Offset relief', 'swapSlab:Transfer'];

const ToolSet = ({ items }) => (
  <Tools>
    {items.map((s, i) => {
      if (s === 'gap') return <ToolPair key={i} />;
      const [key, label] = s.split(':');
      const arrow = key.includes('>');
      return (
        <ToolPair key={i} $arrow={arrow}>
          <Tool $active={key.includes('*')} aria-label={label}><Icon name={key.replace(/[>*]/g, '')} /></Tool>
          {arrow && <Flyout aria-label={`${label} options`}><Icon name="tri" size={10} /></Flyout>}
        </ToolPair>
      );
    })}
  </Tools>
);

const Head = ({ children }) => (
  <SectionHead>{children}<MiniButton aria-label={`Collapse ${children}`}><Icon name="chevron" size={14} /></MiniButton></SectionHead>
);

const ModelInfo = (props) => (
  <Info {...props}>
    <dt>Artwork</dt><dt>Relief</dt>
    <dd>X: 1000 mm</dd><dd>Max. Z: 0 mm</dd>
    <dd>Y: 1000 mm</dd><dd>Min. Z: 0 mm</dd>
    <dd>4000 x 4000 pixels</dd>
  </Info>
);

const PanelButtons = () => ['help', 'pin', 'close'].map((n) => <MiniButton key={n} aria-label={n}><Icon name={n} size={16} /></MiniButton>);

const BAR = ['cube1', 'cube2', 'cube3', 'cube4', '|', 'zoom', '|', 'bulb', '|', 'reliefSlab*', 'axes', 'puzzle', 'cylinder', 'greyBlock', 'greyMill', 'vecIcon*', 'blueStar*', 'blueRed*', 'redBlue', '|', 'goldSlab*', 'bitmapIcon', 'starZoom', 'prism', 'rainbow'];

const COLOURS = ['#000000', '#ffffff', '#00ffff', '#3041e0', '#5dbf4f', '#db0f22', '#a32adf', '#ffff7f', '#ada033', '#fccb12'];

const TREE = [
  { name: 'Vectors', icon: 'vecIcon', open: true, actions: ['plus', 'bulbsOff'] },
  { name: 'Bitmaps', icon: 'bitmapIcon', open: true, actions: ['plus', 'bulbs'] },
  { name: 'Front Relief', icon: 'star', open: true, hot: true, actions: ['plus', 'grid', 'bulbs'] },
  { name: 'Back Relief', icon: 'star', open: true, actions: ['plus', 'grid', 'bulbs'] },
  { name: 'Clipart', icon: 'starBlue', actions: ['bulbs'] },
  { name: 'Sheets', icon: 'sheets', open: true, actions: ['plus'] },
  { name: 'Toolpaths', icon: 'bit', actions: [] },
];

/* Depth-fighting texture of the floor: solid bands with a fine diagonal grain between them. */
const PW = 70;
const PH = 45;
const grain = (() => {
  let d = '';
  for (let y = 0; y < PH; y++) {
    for (let x = 0; x < PW; x++) {
      const u = (y * 14 + x * 9) % 126;
      if (u < 46 || (3 * x + 2 * y) % 5 < 2) d += `M${x} ${y}h1v1h-1z`;
    }
  }
  return d;
})();

const Scene = () => (
  <svg viewBox="0 0 1329 826" preserveAspectRatio="xMidYMid meet" role="img" aria-label="3D relief preview">
    <defs>
      <radialGradient id="s1" gradientUnits="userSpaceOnUse" cx="655" cy="345" r="330">
        <stop offset="0" stopColor="#ffff9c" /><stop offset=".45" stopColor="#ffff82" /><stop offset="1" stopColor="#ffff6c" />
      </radialGradient>
      <radialGradient id="s2" gradientUnits="userSpaceOnUse" cx="500" cy="545" r="130">
        <stop offset="0" stopColor="#ffff90" stopOpacity=".8" /><stop offset=".4" stopColor="#ffff88" stopOpacity=".5" /><stop offset="1" stopColor="#ffff70" stopOpacity="0" />
      </radialGradient>
      <linearGradient id="s3" gradientUnits="userSpaceOnUse" x1="761" y1="270" x2="935" y2="262">
        <stop offset="0" stopColor="#76661a" /><stop offset=".07" stopColor="#7c6b1b" /><stop offset=".14" stopColor="#a79226" />
        <stop offset=".22" stopColor="#7d6b1b" /><stop offset=".4" stopColor="#6b5c17" /><stop offset=".75" stopColor="#685916" /><stop offset="1" stopColor="#72621a" />
      </linearGradient>
      <linearGradient id="s4" gradientUnits="userSpaceOnUse" x1="860" y1="236" x2="864" y2="342">
        <stop offset="0" stopColor="#a4944f" stopOpacity="0" /><stop offset=".25" stopColor="#a4944f" stopOpacity=".3" />
        <stop offset=".45" stopColor="#a4944f" stopOpacity=".9" /><stop offset=".6" stopColor="#a4944f" stopOpacity=".85" />
        <stop offset=".8" stopColor="#a4944f" stopOpacity=".3" /><stop offset="1" stopColor="#a4944f" stopOpacity="0" />
      </linearGradient>
      <linearGradient id="s5" gradientUnits="userSpaceOnUse" x1="0" y1="390" x2="0" y2="620">
        <stop offset="0" stopColor="#94862f" stopOpacity="0" /><stop offset=".6" stopColor="#94862f" stopOpacity=".8" /><stop offset="1" stopColor="#7a6a1e" stopOpacity=".6" />
      </linearGradient>
      <linearGradient id="fade" gradientUnits="userSpaceOnUse" x1="790" y1="0" x2="850" y2="0">
        <stop offset="0" stopColor="#fff" stopOpacity="0" /><stop offset="1" stopColor="#fff" stopOpacity="1" />
      </linearGradient>
      <linearGradient id="hl" gradientUnits="userSpaceOnUse" x1="788" y1="0" x2="946" y2="0">
        <stop offset="0" stopColor="#fff" stopOpacity="0" /><stop offset=".12" stopColor="#fff" stopOpacity=".8" /><stop offset="1" stopColor="#fff" />
      </linearGradient>
      <mask id="hm" maskUnits="userSpaceOnUse" x="780" y="200" width="180" height="460"><rect x="786" y="200" width="160" height="460" fill="url(#hl)" /></mask>
      <mask id="fm" maskUnits="userSpaceOnUse" x="770" y="550" width="190" height="160"><rect x="770" y="550" width="190" height="160" fill="url(#fade)" /></mask>
      <pattern id="grain" width={PW} height={PH} patternUnits="userSpaceOnUse">
        <path d={grain} fill="#544710" shapeRendering="crispEdges" />
      </pattern>
      <clipPath id="sideClip"><path d="M761 257 919.500 135 938.500 566 780.500 690z" /></clipPath>
      <clipPath id="frontFloor"><path d="M348.500 706.500 508 586 775.500 575 781 690z" /></clipPath>
      <clipPath id="sideFloor"><path d="M775.500 575 938.500 566 781 690z" /></clipPath>
    </defs>
    <g shapeRendering="crispEdges">
      <path d="M761 257 919.500 135 938.500 566 781 690z" fill="url(#s3)" />
      <path d="M329 276 761 257 781 690 348.500 706.500z" fill="url(#s1)" />
      <path d="M329 276 761 257 781 690 348.500 706.500z" fill="url(#s2)" />
    </g>
    <g clipPath="url(#sideClip)">
      <g mask="url(#hm)">
        <rect x="786" y="220" width="160" height="140" fill="url(#s4)" />
        <rect x="786" y="390" width="160" height="230" fill="url(#s5)" />
      </g>
    </g>
    <g clipPath="url(#frontFloor)"><rect x="340" y="560" width="450" height="160" fill="url(#grain)" /></g>
    <g clipPath="url(#sideFloor)">
      <rect x="770" y="560" width="180" height="140" fill="#7d6d20" />
      <rect x="770" y="560" width="180" height="140" fill="url(#grain)" opacity=".75" />
      <rect x="770" y="560" width="180" height="140" fill="#6a5b18" opacity=".65" mask="url(#fm)" />
    </g>
  </svg>
);

export default function App() {
  return (
    <Shell>
      <Global />
      <TitleBar>
        <Icon name="logo" size={16} scale={0.667} />
        <span>(Untitled) - Autodesk ArtCAM Premium 2018</span>
        <WindowButtons>
          {['minimise', 'restore', 'closeWin'].map((n) => <WindowButton key={n} aria-label={n}><Icon name={n} size={16} /></WindowButton>)}
        </WindowButtons>
      </TitleBar>
      <MenuBar>
        <Grip $h={26} $gap={-2} />
        {['File', 'Edit', 'View', 'Model', 'Vector', 'Bitmap', 'Relief', 'Toolpath', '3D Printing', 'Window', 'Help'].map((m) => <button key={m}>{m}</button>)}
      </MenuBar>
      <Main>
        <Assistant>
          <PanelTitle><h2>Assistant</h2><PanelButtons /></PanelTitle>
          <Favourites>
            <MiniButton aria-label="Favourites"><Icon name="starGold" size={18} /></MiniButton>
            <MiniButton aria-label="More"><Icon name="tri" size={10} /></MiniButton>
          </Favourites>
          <ScrollRow>
            <Sections>
              <section><Head>Model Information</Head><ModelInfo $col={110} $line={13} $min={91} $pad="0" /></section>
              <Section><Head>File</Head><ToolSet items={FILE} /></Section>
              <Section><Head>Model</Head><ToolSet items={MODEL} /></Section>
              <Section>
                <Head>Bitmap Tools</Head>
                <Brush>Brush Diameter:<Slider type="range" defaultValue="0" $w={152} $track={4} $tw={10} $th={17} /></Brush>
                <ToolSet items={BITMAP} />
              </Section>
              <Section><Head>Vector Tools</Head><ToolSet items={VECTOR} /></Section>
              <Section><Head>Fill Tools</Head><ToolSet items={FILL} /></Section>
              <Section><Head>Position, Combine, Trim Vectors</Head><ToolSet items={POSITION} /></Section>
              <Section><Head>Relief Tools</Head><ToolSet items={RELIEF} /></Section>
            </Sections>
            <ScrollBar>
              <ScrollButton $h={34} aria-label="Scroll up"><Icon name="scrollUp" size={16} /></ScrollButton>
              <ScrollTrack><ScrollThumb /></ScrollTrack>
              <ScrollButton $h={42} aria-label="Scroll down"><Icon name="scrollDown" size={16} /></ScrollButton>
            </ScrollBar>
          </ScrollRow>
        </Assistant>

        <ViewColumn>
          <TabRow role="tablist">
            <Tab role="tab">2D View - Bitmap Layer</Tab>
            <Tab role="tab" aria-selected="true" $on>3D View</Tab>
            <TabActions>
              {['down', 'close'].map((n) => <MiniButton key={n} aria-label={n}><Icon name={n} size={16} /></MiniButton>)}
            </TabActions>
          </TabRow>
          <ToolBar>
            <Grip $h={28} $gap={4} />
            {BAR.map((b, i) => (b === '|' ? <BarRule key={i} /> : (
              <BarButton key={i} $on={b.endsWith('*')} aria-label={b.replace('*', '')}><Icon name={b.replace('*', '')} size={28} /></BarButton>
            )))}
            <BarSlider><Slider type="range" defaultValue="100" aria-label="Transparency" $w={129} $track={5} $tw={5} $th={14} /></BarSlider>
          </ToolBar>
          <Canvas><Scene /></Canvas>
          <Palette>
            <Current>
              <Ink $c="#000" $area="1 / 1 / 3 / 3" $z={1} />
              <Ink $c="#fff" $area="2 / 2 / 4 / 4" $z={0} />
              <Spot $area="1 / 3 / 2 / 4"><Icon name="link" size={14} /></Spot>
              <Spot $area="3 / 1 / 4 / 2"><Icon name="swap" size={14} /></Spot>
            </Current>
            {COLOURS.map((c) => <Swatch key={c} $c={c} aria-label={c} />)}
          </Palette>
        </ViewColumn>

        <Project>
          <PanelTitle><h2>Project</h2><PanelButtons /></PanelTitle>
          <TreeArea>
            <TreeRow $root><Slot $w={20}><Icon name="smallDoc" size={18} /></Slot><RootName>(Untitled)</RootName></TreeRow>
            <ul>
              {TREE.map((t) => (
                <li key={t.name}>
                  <TreeRow>
                    <Slot $w={18}>{t.open && <Icon name="twisty" size={12} />}</Slot>
                    <Slot $w={20}><Icon name={t.icon} size={20} /></Slot>
                    <Name $hot={t.hot}>{t.name}</Name>
                    {t.actions.map((a) => <RowButton key={a} aria-label={a}><Icon name={a} size={20} /></RowButton>)}
                  </TreeRow>
                </li>
              ))}
            </ul>
          </TreeArea>
          <ModelArea>
            <ModelHead>
              <Slot $w={20}><Icon name="smallDoc" size={18} /></Slot><h2>Model</h2>
              {['home', 'toBottom', 'toTop'].map((n) => <MiniButton key={n} aria-label={n}><Icon name={n} size={16} /></MiniButton>)}
            </ModelHead>
            <Head>Model Information</Head>
            <ModelInfo $col={118} $line={15} $pad="14px 0 0 15px" />
          </ModelArea>
        </Project>
        <ToolboxTab>Toolbox</ToolboxTab>
      </Main>
      <Status>
        <Coord>X: 1207.923</Coord><Coord>Y: 222.737</Coord><Coord>Z: 0.000</Coord><Coord $dim>W:</Coord><Coord $dim>H:</Coord>
      </Status>
      <TaskBar>
        <Start aria-label="Start"><Icon name="windows" size={20} /></Start>
        <Task><Icon name="chrome" size={24} />New Message - Aut...</Task>
        <Task $on><Icon name="logo" size={24} />(Untitled) - Autode...</Task>
        <Tray>
          {['autodesk', 'bluetooth', 'usb', 'shield', 'chromeS', 'idm'].map((n) => <Icon key={n} name={n} size={20} />)}
          <Forty>40</Forty>
          {['amd', 'eset', 'wifi', 'mute'].map((n) => <Icon key={n} name={n} size={20} />)}
        </Tray>
        <Language>ENG</Language>
        <Clock><span>8:39 PM</span><span>Monday</span><span>6/5/2023</span></Clock>
        <Notify aria-label="Notifications"><Icon name="notify" size={32} /></Notify>
      </TaskBar>
    </Shell>
  );
}
